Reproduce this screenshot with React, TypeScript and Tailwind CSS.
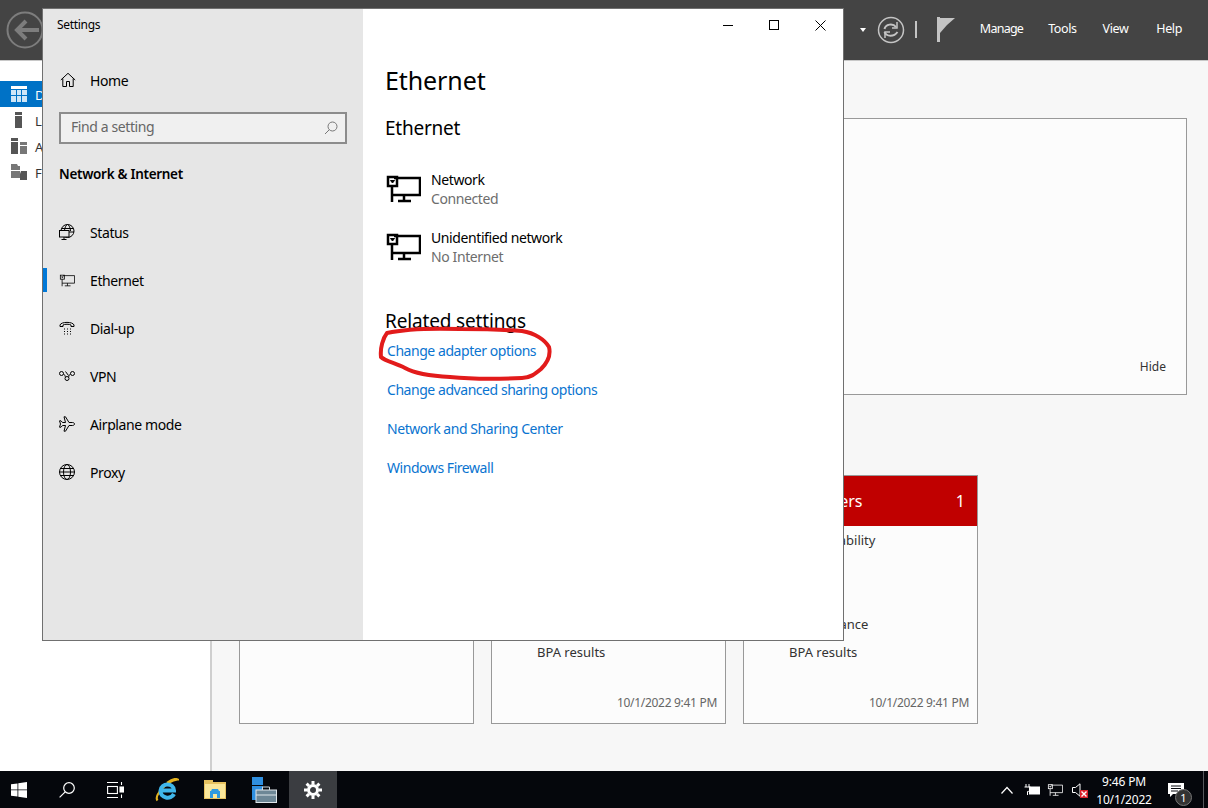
import { ReactNode } from "react";

const font = { fontFamily: '"Noto Sans", "Open Sans", sans-serif' };

function EthernetGlyph({ className, width = 2 }: { className?: string; width?: number }) {
  return (
    <svg viewBox="0 0 36 28" className={className} fill="none" stroke="currentColor" strokeWidth={width}>
      <path d="M9 3H35V20H7" />
      <path d="M7 11V27M19 20V26M13 26H26" />
      <rect x="3" y="2" width="9" height="9" />
      <path d="M5.500 5.500H9.500L7.500 8Z" fill="currentColor" strokeWidth="1" />
    </svg>
  );
}

function StatusIcon() {
  return (
    <svg viewBox="0 0 16 16" className="h-[16px] w-[16px]" fill="none" stroke="currentColor" strokeWidth="1">
      <circle cx="8.500" cy="7" r="6.500" />
      <path d="M5.500 7c0-3 1.500-6 3-6.500 1.500.5 3 3.500 3 6.500M2.500 4.500H14.500M2 8H15" />
      <rect x=".5" y="6.500" width="9.500" height="6.500" fill="#e6e6e6" />
      <path d="M5 13V15.500M2.500 15.500H7.500" />
    </svg>
  );
}

function DialIcon() {
  return (
    <svg viewBox="0 0 16 16" className="h-[16px] w-[16px]" fill="none" stroke="currentColor" strokeWidth="1">
      <path d="M1 6.500V5C2 1.500 14 1.500 15 5V6.500H12V5C11 4 5 4 4 5V6.500Z" />
      <path d="M5 9h1M8 9h1M11 9h1M5 11.500h1M8 11.500h1M11 11.500h1M5 14h1M8 14h1M11 14h1" />
    </svg>
  );
}

function VpnIcon() {
  return (
    <svg viewBox="0 0 16 16" className="h-[16px] w-[16px]" fill="none" stroke="currentColor" strokeWidth="1">
      <circle cx="2.500" cy="5.500" r="2" />
      <circle cx="13.500" cy="5.500" r="2" />
      <circle cx="8" cy="10.500" r="2" />
      <path d="M4.500 6C6 6.500 6 8.500 6.500 9M11.500 6C10 6.500 10 8.500 9.500 9M6.500 3.500 9.500 7.500" />
    </svg>
  );
}

function PlaneIcon() {
  return (
    <svg viewBox="0 0 16 16" className="h-[16px] w-[16px]" fill="none" stroke="currentColor" strokeWidth="1">
      <path d="M15.500 8c0-.9-1-1.500-2-1.500H10L6.500.8H5L6.500 6.500H3.500L2 4.800H.5L1.500 8 .5 11.200H2L3.500 9.500H6.500L5 15.200H6.500L10 9.500H13.500C14.500 9.500 15.500 8.900 15.500 8Z" />
    </svg>
  );
}

function GlobeIcon() {
  return (
    <svg viewBox="0 0 16 16" className="h-[16px] w-[16px]" fill="none" stroke="currentColor" strokeWidth="1">
      <circle cx="8" cy="8" r="7.500" />
      <ellipse cx="8" cy="8" rx="3.500" ry="7.500" />
      <path d="M.5 8H15.500M1.500 4.500H14.500M1.500 11.500H14.500" />
    </svg>
  );
}

const navItems: { label: string; icon: ReactNode; active?: boolean }[] = [
  { label: "Status", icon: <StatusIcon /> },
  { label: "Ethernet", icon: <EthernetGlyph className="h-[13px] w-[16px]" width={1.800} />, active: true },
  { label: "Dial-up", icon: <DialIcon /> },
  { label: "VPN", icon: <VpnIcon /> },
  { label: "Airplane mode", icon: <PlaneIcon /> },
  { label: "Proxy", icon: <GlobeIcon /> },
];

function SettingsWindow() {
  return (
    <div className="absolute left-[42px] top-[8px] flex h-[633px] w-[802px] border border-[#707070] bg-white text-black">
      <aside className="flex w-[320px] flex-col bg-[#e6e6e6]">
        <div className="flex h-[32px] items-center pl-[14px] text-[12px] tracking-[-0.3px]">Settings</div>
        <div className="mt-[15px] flex h-[48px] items-center pl-[17px] text-[14px] tracking-[-0.4px]">
          <svg viewBox="0 0 16 16" className="h-[16px] w-[16px]" fill="none" stroke="currentColor" strokeWidth="1">
            <path d="M.8 8 8 1.300 15.200 8M2.800 6.500V14.500H6.500V9.500H9.500V14.500H13.200V6.500" />
          </svg>
          <span className="ml-[14px]">Home</span>
        </div>
        <div className="mx-[16px] mt-[8px] flex h-[32px] items-center justify-between border-2 border-[#8c8c8c] bg-[#f0f0f0] pl-[10px] pr-[7px] text-[14px] tracking-[-0.4px] text-[#666666]">
          <span className="pb-[3px]">Find a setting</span>
          <svg viewBox="0 0 14 14" className="h-[14px] w-[14px]" fill="none" stroke="#777777" strokeWidth="1">
            <circle cx="8.500" cy="5.500" r="4.500" />
            <path d="M5.300 8.700 1 13" />
          </svg>
        </div>
        <div className="mt-[20px] pl-[16px] text-[13.500px] font-semibold leading-[20px] tracking-[-0.3px]">Network &amp; Internet</div>
        <nav className="mt-[24px] flex flex-col">
          {navItems.map((item) => (
            <div key={item.label} className="relative flex h-[48px] items-center text-[14px] tracking-[-0.4px]">
              {item.active && <span className="absolute left-0 top-[12px] h-[24px] w-[4px] bg-[#0078d7]" />}
              <span className="flex w-[47px] justify-end pr-[15px]">{item.icon}</span>
              <span>{item.label}</span>
            </div>
          ))}
        </nav>
      </aside>
      <main className="relative flex-1 pl-[22px]">
        <div className="absolute right-0 top-0 flex h-[32px] items-center">
          <span className="flex h-[32px] w-[46px] items-center justify-center">
            <span className="h-px w-[10px] bg-black" />
          </span>
          <span className="flex h-[32px] w-[46px] items-center justify-center">
            <span className="h-[10px] w-[10px] border border-black" />
          </span>
          <span className="flex h-[32px] w-[46px] items-center justify-center">
            <svg viewBox="0 0 11 11" className="h-[11px] w-[11px]" stroke="black" strokeWidth="1">
              <path d="M.5.5 10.500 10.500M10.500.5.5 10.500" />
            </svg>
          </span>
        </div>
        <h1 className="pt-[49px] text-[25px] leading-[44px] tracking-[-0.1px]">Ethernet</h1>
        <h2 className="mt-[12px] text-[19px] leading-[28px] tracking-[-0.25px]">Ethernet</h2>
        <div className="mt-[27px] flex flex-col gap-[18px]">
          {[
            ["Network", "Connected"],
            ["Unidentified network", "No Internet"],
          ].map(([name, state]) => (
            <div key={name} className="flex h-[40px] items-center">
              <EthernetGlyph className="h-[28px] w-[36px]" width={2.500} />
              <div className="ml-[10px] text-[14px] leading-[19px] tracking-[-0.4px]">
                <div>{name}</div>
                <div className="text-[#6d6d6d]">{state}</div>
              </div>
            </div>
          ))}
        </div>
        <h2 className="mt-[40px] text-[19px] leading-[28px] tracking-[-0.15px]">Related settings</h2>
        <div className="mt-[6px] flex flex-col gap-[19px] pl-[2px] text-[14px] leading-[20px] tracking-[-0.45px] text-[#0a74d0]">
          <span>Change adapter options</span>
          <span>Change advanced sharing options</span>
          <span>Network and Sharing Center</span>
          <span>Windows Firewall</span>
        </div>
      </main>
    </div>
  );
}

const sideRows = ["Dashboard", "Local Server", "All Servers", "File and Storage Services"];

function SideIcon({ i }: { i: number }) {
  if (i === 0)
    return (
      <svg viewBox="0 0 16 16" className="h-[16px] w-[16px]" fill="#cfe6f7">
        <path fill="white" d="M0 0H16V3H0Z" />
        <path d="M0 4H5V9H0ZM6 4H10V9H6ZM11 4H16V9H11ZM0 10H5V16H0ZM6 10H10V16H6ZM11 10H16V16H11Z" />
      </svg>
    );
  if (i === 1)
    return (
      <svg viewBox="0 0 16 16" className="h-[16px] w-[16px]" fill="#555555">
        <path d="M4 0H11V3H4ZM4 4H11V16H4Z" />
      </svg>
    );
  if (i === 2)
    return (
      <svg viewBox="0 0 16 16" className="h-[16px] w-[16px]" fill="#555555">
        <path d="M0 0H7V3H0ZM0 4H7V16H0Z" />
        <path fill="#777777" d="M9 4H16V7H9ZM9 8H16V16H9Z" />
      </svg>
    );
  return (
    <svg viewBox="0 0 16 16" className="h-[16px] w-[16px]" fill="#777777">
      <path d="M0 0H6L7 2H9V6H0ZM0 7H9V14H0Z" />
      <path fill="#555555" d="M10 7H16V16H9V10Z" />
    </svg>
  );
}

function Card({ red, title, count }: { red?: boolean; title?: string; count?: string }) {
  return (
    <div className="flex h-[249px] w-[235px] flex-col border border-[#999999] bg-[#fcfcfc] text-[13px] text-[#333333]">
      {red ? (
        <div className="flex h-[50px] items-center justify-between bg-[#c00000] pl-[40px] pr-[12px] text-[16px] text-white">
          <span>{title}</span>
          <span>{count}</span>
        </div>
      ) : (
        <div className="h-[50px]" />
      )}
      {title !== undefined && (
        <div className="flex flex-1 flex-col pl-[45px] leading-[28px]">
          <span>Manageability</span>
          <span>Events</span>
          <span>Services</span>
          <span>Performance</span>
          <span>BPA results</span>
          <span className="mt-[27px] self-end pr-[8px] text-[12px] leading-[20px] tracking-[-0.3px] text-[#666666]">10/1/2022 9:41 PM</span>
        </div>
      )}
    </div>
  );
}

function Header() {
  return (
    <header className="flex h-[61px] shrink-0 items-center justify-between border-b border-[#c8c8c8] bg-[#444444] pb-[1px] pl-[6px] pr-[26px]">
      <svg viewBox="0 0 38 38" className="h-[38px] w-[38px]" fill="none" stroke="#7d7d7d">
        <circle cx="19" cy="19" r="17.500" strokeWidth="2" />
        <path d="M20 10 11 19 20 28" strokeWidth="4" />
        <path d="M12 19H33" strokeWidth="4" />
      </svg>
      <div className="flex items-center text-[12.500px] tracking-[-0.4px] text-white">
        <span className="h-0 w-0 border-x-[3.500px] border-t-[4px] border-x-transparent border-t-white" />
        <svg viewBox="0 0 28 28" className="ml-[11px] h-[28px] w-[28px]" fill="none" stroke="#c4c4c4">
          <circle cx="14" cy="14" r="12.500" strokeWidth="1.500" />
          <path d="M7.500 13C8.500 8 16 7 19 11M7.500 16C9.500 21 17 21 20.500 16" strokeWidth="2" />
          <path d="M20 6V12H15M8 22V16H13" strokeWidth="1.500" />
        </svg>
        <span className="ml-[10px] h-[17px] w-[2px] bg-[#c4c4c4]" />
        <svg viewBox="0 0 18 25" className="ml-[20px] h-[25px] w-[18px]">
          <path fill="#c4c4c4" d="M0 0H3V25H0ZM3 1H18L10 8 3 16Z" />
        </svg>
        <span className="ml-[25px] tracking-[-0.75px]">Manage</span>
        <span className="ml-[25px]">Tools</span>
        <span className="ml-[26px]">View</span>
        <span className="ml-[28px]">Help</span>
      </div>
    </header>
  );
}

function Taskbar() {
  return (
    <footer className="flex h-[37px] shrink-0 items-center bg-[#05070c] text-white">
      <span className="flex h-full w-[43px] items-center justify-end pr-[16px]">
        <svg viewBox="0 0 16 16" className="h-[16px] w-[16px]" fill="white">
          <path d="M0 2.300 6.500 1.400V7.500H0ZM7.300 1.300 16 0V7.500H7.300ZM0 8.300H6.500V14.600L0 13.700ZM7.300 8.300H16V16L7.300 14.700Z" />
        </svg>
      </span>
      <span className="flex h-full w-[48px] items-center justify-center">
        <svg viewBox="0 0 16 16" className="h-[16px] w-[16px]" fill="none" stroke="white" strokeWidth="1.200">
          <circle cx="10" cy="6" r="5.300" />
          <path d="M6.200 9.800.6 15.400" />
        </svg>
      </span>
      <span className="flex h-full w-[54px] items-center pl-[16px]">
        <svg viewBox="0 0 17 16" className="h-[16px] w-[17px]" fill="none" stroke="white" strokeWidth="1.100">
          <path d="M0 .5H11M0 15.500H11" />
          <rect x=".6" y="4.500" width="9.800" height="7" />
          <path d="M14.500 0V3" />
          <rect x="13" y="5" width="3.500" height="5" fill="white" />
          <path d="M14.500 12.500V16" />
        </svg>
      </span>
      <span className="flex h-full w-[48px] items-center pl-[10px]">
        <svg viewBox="0 0 24 24" className="h-[24px] w-[24px]" fill="none">
          <path d="M2.500 22.500C-1 18 11 3 22.500 1.500 20 0 16 2 12 5" stroke="#e3b21f" strokeWidth="2.200" />
          <path d="M6.500 12.500H19C19 4.500 6 4.500 5.500 12.500C5 20.500 16 22 19 16" stroke="#3fb6ea" strokeWidth="4" />
        </svg>
      </span>
      <span className="flex h-full w-[48px] items-center pl-[11px]">
        <svg viewBox="0 0 22 19" className="h-[19px] w-[22px]">
          <path fill="#e7c25f" d="M0 0H9V2H22V19H0Z" />
          <path fill="#fbe79a" d="M1 4H21V18H1Z" />
          <path fill="#2f9ae0" d="M6 11H7L8 9H14L15 11H16V18H13V14H9V18H6Z" />
        </svg>
      </span>
      <span className="flex h-full w-[48px] items-center pl-[11px]">
        <svg viewBox="0 0 25 26" className="h-[26px] w-[25px]">
          <path fill="#2f8fe0" d="M0 0H11V8H0ZM0 9H11V23H0Z" />
          <path fill="none" stroke="#d0d8de" d="M10.500 13V10H17.500V13" />
          <rect x="4" y="13" width="20.500" height="12.500" fill="#6d8796" stroke="#dfe6ea" />
          <path stroke="#dfe6ea" d="M4 18H24" />
        </svg>
      </span>
      <span className="flex h-full w-[48px] items-center justify-center bg-[#3b3d41]">
        <svg viewBox="0 0 18 18" className="h-[18px] w-[18px]" fill="none" stroke="white">
          <circle cx="9" cy="9" r="4.500" strokeWidth="3" />
          <path d="M9 0V3.500M9 14.500V18M0 9H3.500M14.500 9H18M2.600 2.600 5 5M13 13 15.400 15.400M2.600 15.400 5 13M13 5 15.400 2.600" strokeWidth="3" />
        </svg>
      </span>
      <div className="ml-auto flex h-full items-center">
        <svg viewBox="0 0 12 8" className="h-[8px] w-[12px]" fill="none" stroke="white" strokeWidth="1.200">
          <path d="M.5 7.500 6 1.500 11.500 7.500" />
        </svg>
        <svg viewBox="0 0 16 11" className="ml-[11px] h-[11px] w-[16px]" fill="none" stroke="white">
          <path d="M2 0V3M5 0V3M.5 3H6.500V5C6.500 7 4.500 7.500 3.500 7.500V11" />
          <rect x="5.500" y="3" width="10" height="7" fill="white" />
        </svg>
        <EthernetGlyph className="ml-[7px] h-[14px] w-[16px]" width={1.800} />
        <span className="relative ml-[9px] h-[14px] w-[16px]">
          <svg viewBox="0 0 9 14" className="h-[14px] w-[9px]" fill="none" stroke="white">
            <path d="M.5 4.500H3.500L8 .8V13.200L3.500 9.500H.5Z" />
          </svg>
          <span className="absolute left-[8px] top-[7px] flex h-[8px] w-[8px] items-center justify-center bg-[#d9202a]">
            <svg viewBox="0 0 6 6" className="h-[6px] w-[6px]" stroke="white" strokeWidth="1.400">
              <path d="M.5.5 5.500 5.500M5.500.5.5 5.500" />
            </svg>
          </span>
        </span>
        <div className="ml-[9px] flex w-[54px] flex-col items-center pt-[2px] text-[12px] leading-[18px] tracking-[-0.15px]">
          <span>9:46 PM</span>
          <span>10/1/2022</span>
        </div>
        <span className="relative ml-[15px] mr-[5px] h-[27px] w-[32px]">
          <svg viewBox="0 0 16 14" className="absolute left-[2px] top-[7px] h-[14px] w-[16px]">
            <path fill="white" d="M0 0H16V11H5L2 14V11H0Z" />
            <path stroke="#05070c" d="M3 3H13M3 5.500H13M3 8H10" />
          </svg>
          <span className="absolute left-[9px] top-[13px] flex h-[17px] w-[17px] items-center justify-center rounded-full border border-[#777777] bg-[#333333] text-[11px] leading-none">1</span>
        </span>
        <span className="h-full w-px bg-[#55585c]" />
        <span className="w-[4px]" />
      </div>
    </footer>
  );
}

export default function App() {
  return (
    <div className="relative flex h-[808px] w-[1208px] flex-col overflow-hidden bg-[#f7f7f7]" style={font}>
      <Header />
      <div className="flex min-h-0 flex-1">
        <aside className="w-[212px] shrink-0 border-r-2 border-[#cfcfcf] bg-white pt-[20px] text-[13px] text-[#333333]">
          {sideRows.map((row, i) => (
            <div
              key={row}
              className={`flex h-[26px] items-center gap-[8px] pl-[11px] ${i === 0 ? "bg-[#0072c6] text-white" : ""}`}
            >
              <SideIcon i={i} />
              <span className="whitespace-nowrap pt-[3px]">{row}</span>
            </div>
          ))}
        </aside>
        <section className="flex-1 pl-[27px] pr-[21px] pt-[57px]">
          <div className="flex h-[277px] items-end justify-end border border-[#999999] bg-[#fcfcfc] pb-[18px] pr-[20px] text-[12px] text-[#333333]">
            Hide
          </div>
          <div className="mt-[80px] flex gap-[17px]">
            <Card />
            <Card title="Local Server" />
            <Card red title="All Servers" count="1" />
          </div>
        </section>
      </div>
      <Taskbar />
      <SettingsWindow />
      <svg className="pointer-events-none absolute left-0 top-0 h-[808px] w-[1208px]" viewBox="0 0 1208 808" fill="none">
        <path
          d="M387 333C405 329 430 328 460 329C485 329 510 330 522 331C535 333 545 340 549 347C551 355 548 362 541 369C535 374 530 378 522 378C500 379 470 379 450 377C430 376 414 373 405 368C395 363 385 361 381 357C380 348 383 338 387 333Z"
          stroke="#e21b1b"
          strokeWidth="4"
        />
      </svg>
    </div>
  );
}
